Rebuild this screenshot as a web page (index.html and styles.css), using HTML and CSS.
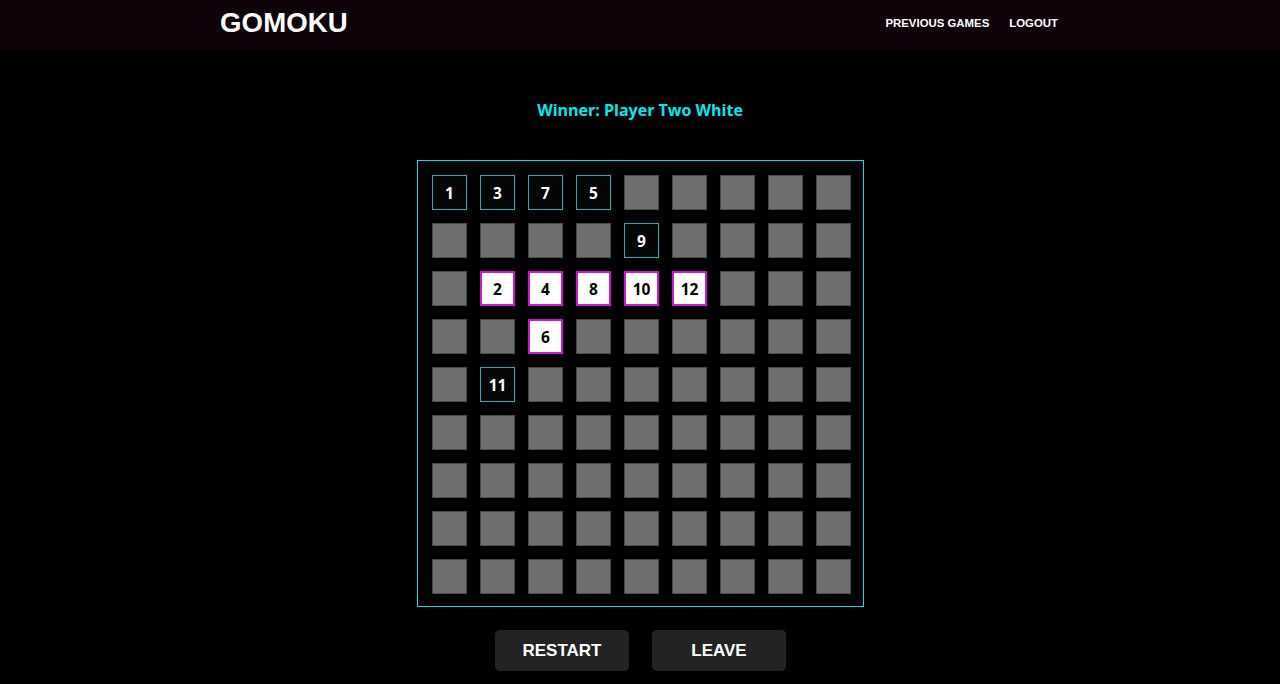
FILE: index.html
```html
<!DOCTYPE html>
<html>
<head>
<meta charset="utf-8">
<link rel="stylesheet" href="styles.css">
</head>
<body>
<header class="topbar">
  <div class="topbar-inner">
    <div class="brand">GOMOKU</div>
    <nav class="nav">
      <a class="nav-link">PREVIOUS GAMES</a>
      <a class="nav-link">LOGOUT</a>
    </nav>
  </div>
</header>
<main class="main">
  <div class="winner">Winner: Player Two White</div>
  <div class="board" id="board"></div>
  <div class="actions">
    <button class="btn">RESTART</button>
    <button class="btn">LEAVE</button>
  </div>
</main>
<script src="app.js"></script>
</body>
</html>
```
FILE: styles.css
```css
* { box-sizing: border-box; }
html, body { margin: 0; padding: 0; background: #000; }
body { font-family: "Liberation Sans", Arial, sans-serif; color: #fff; }
.topbar { background: #0e0208; height: 50px; }
.topbar-inner { width: 838px; margin-left: 220px; height: 50px; display: flex; align-items: center; justify-content: space-between; }
.brand { font-size: 27.6px; font-weight: bold; letter-spacing: 0.1px; color: #fff; margin-top: -4px; }
.nav { display: flex; gap: 20px; margin-top: -5px; }
.nav-link { font-size: 11.4px; font-weight: bold; color: #fff; }
.main { display: flex; flex-direction: column; align-items: center; }
.winner { margin-top: 50px; font-family: "Open Sans", sans-serif; font-weight: bold; font-size: 16px; color: #00e8ec; height: 20px; line-height: 20px; }
.board { margin-top: 40px; margin-left: 1px; width: 447px; height: 447px; border: 1px solid #00e0e4; padding: 14px 12px 12px 14px; display: grid; grid-template-columns: repeat(9, 35px); grid-auto-rows: 35px; column-gap: 13px; row-gap: 13px; }
.cell { display: flex; align-items: center; justify-content: center; font-family: "Open Sans", sans-serif; font-weight: bold; font-size: 15.5px; }
.cell.empty { background: #6e6e6e; border: 1px solid #4a4a4a; }
.cell.black { background: #050505; border: 1px solid #17b4b4; color: #fff; }
.cell.white { background: #fff; border: 2px solid #d414d4; color: #000; }
.actions { display: flex; gap: 23px; margin-top: 23px; margin-left: 1px; }
.btn { width: 134px; height: 41px; background: #232323; border: none; border-radius: 5px; color: #fff; font-family: "Liberation Sans", Arial, sans-serif; font-weight: bold; font-size: 17px; padding: 0; }
```
FILE: app.js
```js
var moves = {"0,0":1,"2,1":2,"0,1":3,"2,2":4,"0,3":5,"3,2":6,"0,2":7,"2,3":8,"1,4":9,"2,4":10,"4,1":11,"2,5":12};
var board = document.getElementById('board');
for (var r = 0; r < 9; r++) {
  for (var c = 0; c < 9; c++) {
    var d = document.createElement('div');
    var n = moves[r + ',' + c];
    if (n) {
      d.className = 'cell ' + (n % 2 ? 'black' : 'white');
      d.textContent = n;
    } else {
      d.className = 'cell empty';
    }
    board.appendChild(d);
  }
}
```
